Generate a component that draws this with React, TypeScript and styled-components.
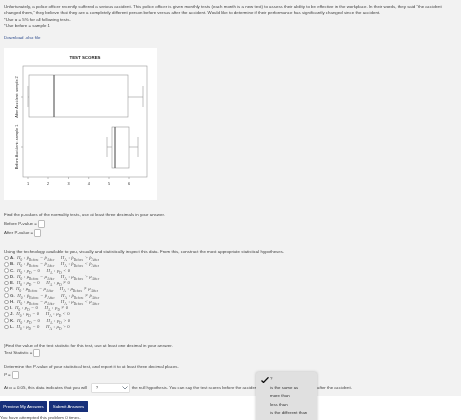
import React from 'react';
import styled, { createGlobalStyle } from 'styled-components';

type Hypothesis = {
    letter: string,
    sym: string,
    left: string,
    right: string,
    op: string
}

const hypotheses: Hypothesis[] = [
    { letter: 'A', sym: 'p̂', left: 'Before', right: 'After', op: '>' },
    { letter: 'B', sym: 'p̂', left: 'Before', right: 'After', op: '<' },
    { letter: 'C', sym: 'p̄', left: 'D', right: '', op: '<' },
    { letter: 'D', sym: 'μ', left: 'Before', right: 'After', op: '>' },
    { letter: 'E', sym: 'μ', left: 'D', right: '', op: '≠' },
    { letter: 'F', sym: 'μ', left: 'Before', right: 'After', op: '≠' },
    { letter: 'G', sym: 'p̂', left: 'Before', right: 'After', op: '≠' },
    { letter: 'H', sym: 'μ', left: 'Before', right: 'After', op: '<' },
    { letter: 'I', sym: 'p̄', left: 'D', right: '', op: '≠' },
    { letter: 'J', sym: 'μ', left: 'D', right: '', op: '<' },
    { letter: 'K', sym: 'p̄', left: 'D', right: '', op: '>' },
    { letter: 'L', sym: 'μ', left: 'D', right: '', op: '>' },
];

const menuItems = ['?', 'is the same as', 'more than', 'less than', 'is the different than'];

const BoxPlot: React.FC = () => (
    <svg width="153" height="152" viewBox="0 0 153 152" style={{ display: 'block' }}>
        <text x="81" y="10.5" fontSize="4.4" fontWeight="700" textAnchor="middle" fill="#222" fontFamily="Liberation Sans">TEST SCORES</text>
        <g fill="none" stroke="#999" strokeWidth="0.6">
            <rect x="19" y="18" width="124" height="111" />
            <rect x="25" y="27" width="99" height="42" />
            <path d="M24 38V59M24 49H25M124 49H139M139 38V59" />
            <rect x="108" y="79" width="17" height="41" />
            <path d="M103 89V109M103 99H108M125 99H134M134 89V109" />
            <path d="M24 129v2M44 129v2M64.500 129v2M84.700 129v2M105 129v2M125 129v2M17 49h2M17 99h2" />
        </g>
        <path d="M50 27V69M111 79V120" stroke="#444" strokeWidth="1" />
        <g fontSize="3.85" textAnchor="middle" fill="#333" fontFamily="Liberation Sans">
            <text x="24" y="136.500">1</text>
            <text x="44" y="136.500">2</text>
            <text x="64.500" y="136.500">3</text>
            <text x="84.700" y="136.500">4</text>
            <text x="105" y="136.500">5</text>
            <text x="125" y="136.500">6</text>
            <text transform="translate(13.500 49) rotate(-90)">After Accident: sample 2</text>
            <text transform="translate(13.500 99) rotate(-90)">Before Accident: sample 1</text>
        </g>
    </svg>
);

const App: React.FC = () => {
    return (
        <Page>
            <GlobalStyle />
            <Panel>
                <Line>Unfortunately, a police officer recently suffered a serious accident. This police officer is given monthly tests (each month is a new test) to assess their ability to be effective in the workplace. In their words, they said "the accident</Line>
                <Line>changed them," they believe that they are a completely different person before versus after the accident. Would like to determine if their performance has significantly changed since the accident.</Line>
                <Line>*Use α = 5% for all following tests.</Line>
                <Line>*Use before = sample 1</Line>
                <Download>Download .xlsx file</Download>
                <PlotCard>
                    <BoxPlot />
                </PlotCard>
                <Line>Find the p-values of the normality tests, use at least three decimals in your answer.</Line>
                <AnswerRow $top={1}>Before P-value =<AnswerBox /></AnswerRow>
                <AnswerRow $top={1}>After P-value =<AnswerBox /></AnswerRow>
                <Spaced $top={12}>Using the technology available to you, visually and statistically inspect this data. From this, construct the most appropriate statistical hypotheses.</Spaced>
                <Options>
                    {hypotheses.map((h) => (
                        <Option key={h.letter}>
                            <Radio />
                            <b>{h.letter}.</b>
                            <Formula>
                                <i>H</i><sub>0</sub> : <i>{h.sym}</i><sub>{h.left}</sub> = {h.right ? <><i>{h.sym}</i><sub>{h.right}</sub></> : '0'}
                            </Formula>
                            <Formula>
                                <i>H</i><sub>A</sub> : <i>{h.sym}</i><sub>{h.left}</sub> {h.op} {h.right ? <><i>{h.sym}</i><sub>{h.right}</sub></> : '0'}
                            </Formula>
                        </Option>
                    ))}
                </Options>
                <Spaced $top={13}>)Find the value of the test statistic for this test, use at least one decimal in your answer.</Spaced>
                <AnswerRow $top={0}>Test Statistic =<AnswerBox /></AnswerRow>
                <Spaced $top={7}>Determine the <i>P</i>-value of your statistical test, and report it to at least three decimal places.</Spaced>
                <AnswerRow $top={0}><i>P</i> =<AnswerBox /></AnswerRow>
                <SelectRow>
                    At α = 0.05, this data indicates that you will
                    <Select>
                        <span>?</span>
                        <svg width="6" height="4" viewBox="0 0 6 4"><path d="M0.500 0.500L3 3L5.500 0.500" fill="none" stroke="#345" strokeWidth="0.6" /></svg>
                    </Select>
                    <BeforeMenu>the null hypothesis. You can say the test scores before the accident</BeforeMenu>
                    <AfterMenu>after the accident.</AfterMenu>
                </SelectRow>
            </Panel>
            <Buttons>
                <ActionButton $width={47}>Preview My Answers</ActionButton>
                <ActionButton $width={39}>Submit Answers</ActionButton>
            </Buttons>
            <Attempts>You have attempted this problem 0 times.</Attempts>
            <Menu>
                {menuItems.map((item, i) => (
                    <MenuItem key={item}>
                        {i === 0 && (
                            <Tick width="8" height="6" viewBox="0 0 8 6">
                                <path d="M0.500 3.500L2.500 5.500L7.500 0.300" fill="none" stroke="#111" strokeWidth="1.300" />
                            </Tick>
                        )}
                        {item}
                    </MenuItem>
                ))}
            </Menu>
        </Page>
    );
};

export default App;

const GlobalStyle = createGlobalStyle`
    body {
        margin: 0;
        background: #fff;
        font-family: "Liberation Sans", Arial, sans-serif;
    }
`;

const Page = styled.div`
    position: relative;
    width: 474px;
    height: 420px;
    overflow: hidden;
    font-size: 4.4px;
    line-height: 6.3px;
    color: #444;
    filter: blur(0.3px);

    sub {
        font-size: 3.5px;
        line-height: 0;
    }
`;

const Panel = styled.div`
    box-sizing: border-box;
    width: 461px;
    height: 396px;
    padding: 4px;
    background: #f2f2f2;
`;

const Line = styled.div`
    white-space: nowrap;
`;

const Spaced = styled(Line)<{ $top: number }>`
    margin-top: ${(p) => p.$top}px;
`;

const Download = styled(Line)`
    margin-top: 6px;
    color: #33508f;
`;

const PlotCard = styled.div`
    width: 153px;
    height: 152px;
    margin: 7px 0 12px;
    background: #fff;
`;

const AnswerRow = styled.div<{ $top: number }>`
    display: flex;
    align-items: center;
    gap: 1px;
    height: 8px;
    margin-top: ${(p) => p.$top}px;
    white-space: nowrap;
`;

const AnswerBox = styled.span`
    box-sizing: border-box;
    width: 7px;
    height: 8px;
    background: #fff;
    border: 0.5px solid #bbb;
    border-radius: 1px;
`;

const Options = styled.div`
    display: flex;
    flex-direction: column;
`;

const Option = styled.div`
    display: flex;
    align-items: center;
    gap: 1.5px;
    height: 6.25px;
    white-space: nowrap;
    color: #555;

    b {
        margin-right: 1px;
    }
`;

const Radio = styled.span`
    box-sizing: border-box;
    width: 4.5px;
    height: 4.5px;
    background: #fff;
    border: 0.5px solid #aaa;
    border-radius: 50%;
`;

const Formula = styled.span`
    margin-right: 5px;
    font-family: "Liberation Serif", serif;
    font-size: 4.8px;
    word-spacing: 0.4px;
`;

const SelectRow = styled.div`
    display: flex;
    align-items: center;
    margin-top: 4.5px;
    height: 10px;
    white-space: nowrap;
`;

const Select = styled.div`
    box-sizing: border-box;
    display: flex;
    align-items: center;
    justify-content: space-between;
    width: 39px;
    height: 10px;
    margin: 0 2px 0 3.5px;
    padding: 0 1px 0 4px;
    background: #fff;
    border: 0.5px solid #ddd;
    border-radius: 1px;
`;

const BeforeMenu = styled.span`
    font-size: 4.25px;
`;

const AfterMenu = styled.span`
    position: absolute;
    left: 317px;
`;

const Buttons = styled.div`
    display: flex;
    gap: 2px;
    margin-top: 5px;
`;

const ActionButton = styled.button<{ $width: number }>`
    width: ${(p) => p.$width}px;
    height: 11px;
    padding: 0;
    border: 0;
    border-radius: 0.5px;
    background: #17307a;
    color: #fff;
    font: 4.4px "Liberation Sans", Arial, sans-serif;
`;

const Attempts = styled(Line)`
    margin-top: 3px;
`;

const Menu = styled.div`
    position: absolute;
    left: 256px;
    top: 372px;
    width: 61px;
    height: 60px;
    padding-top: 3px;
    box-sizing: border-box;
    background: #e0e0e0;
    border-radius: 2px;
    box-shadow: 0 0 3px rgba(0, 0, 0, 0.25);
`;

const MenuItem = styled.div`
    position: relative;
    height: 8.5px;
    padding-left: 14px;
    line-height: 8.5px;
    color: #333;
    white-space: nowrap;
`;

const Tick = styled.svg`
    position: absolute;
    left: 5px;
    top: 1.5px;
`;
